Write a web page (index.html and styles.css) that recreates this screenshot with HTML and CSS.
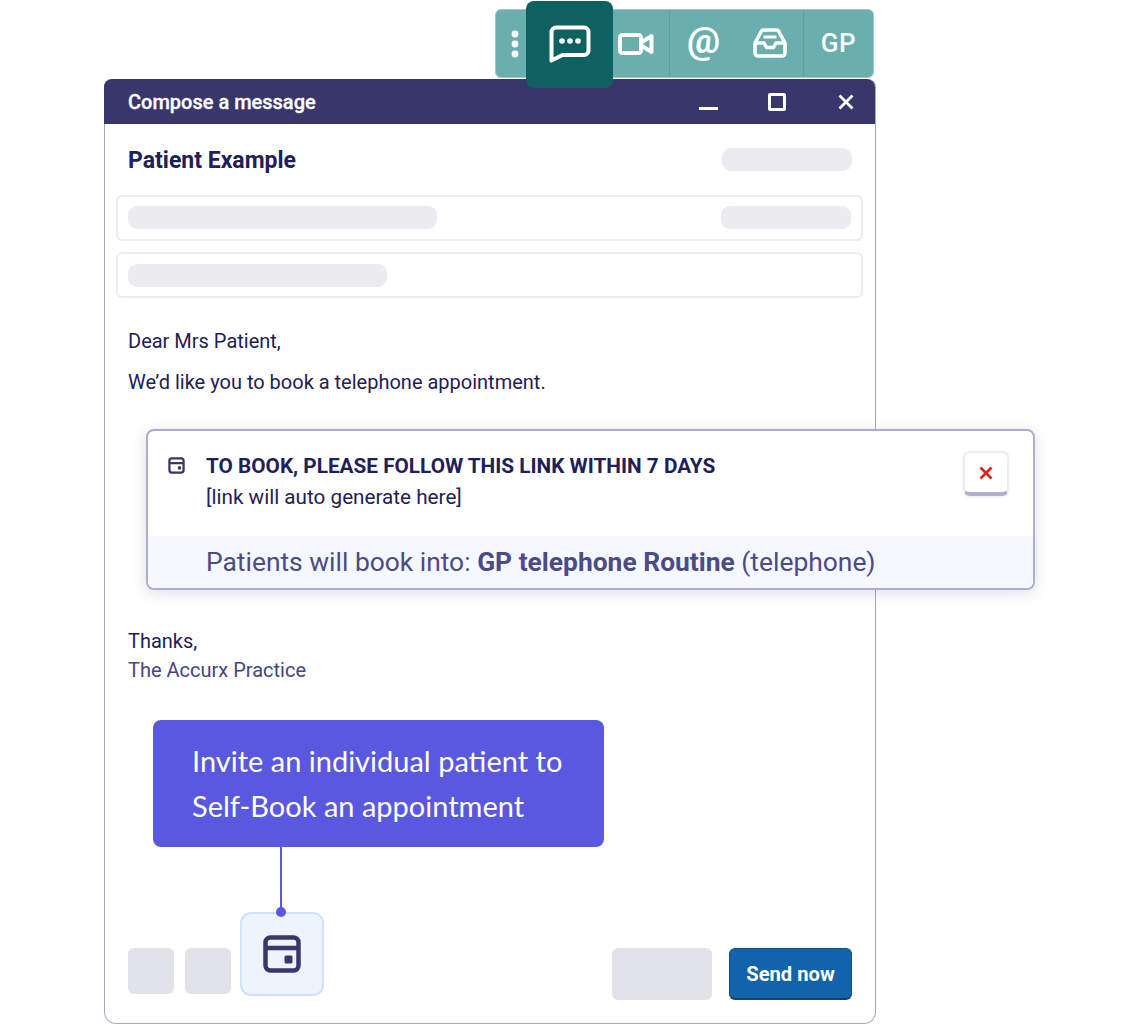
FILE: index.html
```html
<!DOCTYPE html>
<html lang="en">
<head>
<meta charset="utf-8">
<title>Compose a message</title>
<link rel="stylesheet" href="styles.css">
</head>
<body>
<div class="stage">
  <nav class="toolbar">
    <div class="tool tool-grip"><svg width="8" height="28" viewBox="0 0 8 28"><circle cx="4" cy="4" r="3.400" fill="#fff"/><circle cx="4" cy="14" r="3.400" fill="#fff"/><circle cx="4" cy="24" r="3.400" fill="#fff"/></svg></div>
    <div class="tool tool-active"><svg width="42" height="38" viewBox="0 0 42 38"><path d="M2.500 33V7a4.500 4.500 0 0 1 4.500-4.500h28a4.500 4.500 0 0 1 4.500 4.500v18.500a4.500 4.500 0 0 1-4.500 4.500H13.500L2.500 35.500Z" fill="none" stroke="#fff" stroke-width="4" stroke-linejoin="round"/><circle cx="13" cy="16" r="2.800" fill="#fff"/><circle cx="21" cy="16" r="2.800" fill="#fff"/><circle cx="29" cy="16" r="2.800" fill="#fff"/></svg></div>
    <div class="tool tool-video"><svg width="36" height="22" viewBox="0 0 36 22"><rect x="2" y="2" width="21" height="18" rx="2.500" fill="none" stroke="#fff" stroke-width="4"/><path d="M24 9 33.500 3V19L24 13" fill="none" stroke="#fff" stroke-width="4" stroke-linejoin="round"/></svg></div>
    <div class="tool tool-at">@</div>
    <div class="tool tool-inbox"><svg width="34" height="30" viewBox="0 0 34 30"><path d="M2 15 8.500 3a2 2 0 0 1 1.700-1h13.600a2 2 0 0 1 1.700 1L32 15v10a3 3 0 0 1-3 3H5a3 3 0 0 1-3-3Z" fill="none" stroke="#fff" stroke-width="3.600" stroke-linejoin="round"/><path d="M2 15h9l2.500 4.500h7L23 15h9" fill="none" stroke="#fff" stroke-width="3.600" stroke-linejoin="round"/><path d="M10.500 9h13" stroke="#fff" stroke-width="3"/></svg></div>
    <div class="tool tool-gp">GP</div>
  </nav>

  <main class="window">
    <header class="titlebar">
      <h1 class="title">Compose a message</h1>
      <div class="controls">
        <span class="ctl-min"></span>
        <span class="ctl-max"></span>
        <svg class="ctl-close" width="16" height="16" viewBox="0 0 16 16"><path d="M1.500 1.500l13 13M14.500 1.500l-13 13" stroke="#fff" stroke-width="2.800"/></svg>
      </div>
    </header>

    <section class="body">
      <div class="patient-row">
        <h2 class="patient">Patient Example</h2>
        <span class="bar bar-status"></span>
      </div>
      <div class="field field-one">
        <span class="bar bar-a"></span>
        <span class="bar bar-b"></span>
      </div>
      <div class="field field-two">
        <span class="bar bar-c"></span>
      </div>

      <p class="line greet">Dear Mrs Patient,</p>
      <p class="line ask">We’d like you to book a telephone appointment.</p>

      <div class="callout">
        <div class="callout-main">
          <svg class="cal-small" width="17" height="17" viewBox="0 0 24 24"><rect x="2" y="2" width="20" height="20" rx="3.500" fill="none" stroke="#38366a" stroke-width="3.200"/><path d="M3 8.500h18" stroke="#38366a" stroke-width="3.200"/><rect x="14" y="13" width="4.500" height="4.500" rx="1" fill="#38366a"/></svg>
          <div class="callout-text">
            <div class="callout-head">TO BOOK, PLEASE FOLLOW THIS LINK WITHIN 7 DAYS</div>
            <div class="callout-link">[link will auto generate here]</div>
          </div>
          <button class="remove" type="button" aria-label="Remove"><svg width="14" height="14" viewBox="0 0 14 14"><path d="M1.500 1.500l11 11M12.500 1.500l-11 11" stroke="#e2231a" stroke-width="2.600"/></svg></button>
        </div>
        <div class="callout-foot">Patients will book into: <b>GP telephone Routine</b> (telephone)</div>
      </div>

      <p class="line thanks">Thanks,</p>
      <p class="line sign">The Accurx Practice</p>

      <div class="tip">Invite an individual patient to<br>Self-Book an appointment</div>
      <div class="connector"></div>

      <div class="actions">
        <span class="square"></span>
        <span class="square"></span>
        <span class="self-book">
          <span class="dot"></span>
          <svg width="38" height="38" viewBox="0 0 38 38"><rect x="2.500" y="2.500" width="33" height="33" rx="5" fill="none" stroke="#38366a" stroke-width="4.500"/><path d="M3 13h32" stroke="#38366a" stroke-width="4.500"/><rect x="21.500" y="20.500" width="8" height="8" rx="1.500" fill="#38366a"/></svg>
        </span>
        <span class="secondary"></span>
        <button class="send" type="button">Send now</button>
      </div>
    </section>
  </main>
</div>
</body>
</html>
```

FILE: styles.css
```css
* { box-sizing: border-box; }
html, body { margin: 0; padding: 0; background: #fff; }
body { font-family: Roboto, "Liberation Sans", sans-serif; color: #1f2057; }
.stage { width: 1148px; height: 1024px; padding-top: 9px; overflow: hidden; }

.toolbar {
  display: flex;
  height: 69px;
  width: 379px;
  margin-left: 495px;
  background: #6aaeae;
  border: 1px solid #9fc9c9;
  border-radius: 6px;
  color: #fff;
}
.tool { display: flex; align-items: center; justify-content: center; height: 100%; }
.tool-grip { width: 30px; padding-left: 15px; justify-content: flex-start; }
.tool-active {
  width: 87px;
  height: 87px;
  margin-top: -9px;
  background: #0f6060;
  border-radius: 8px;
  position: relative;
  z-index: 2;
  padding-bottom: 2px;
}
.tool-video { width: 57px; border-right: 1px solid #5f9d9e; padding-right: 10px; }
.tool-at { width: 67px; font-size: 37px; font-weight: 700; padding-bottom: 7px; }
.tool-inbox { width: 67px; border-right: 1px solid #5f9d9e; padding-bottom: 1px; }
.tool-gp { flex: 1; font-size: 26px; font-weight: 500; letter-spacing: .5px; padding-bottom: 1px; }

.window {
  width: 772px;
  height: 945px;
  margin-left: 104px;
  margin-top: 1px;
  border: 1px solid #a9a7c9;
  border-top: 0;
  border-radius: 8px 8px 12px 12px;
  background: #fff;
}
.titlebar {
  display: flex;
  align-items: center;
  justify-content: space-between;
  height: 45px;
  margin: 0 0 0 -1px;
  padding: 0 21px 0 24px;
  background: #38366a;
  border-radius: 8px 8px 0 0;
  color: #fff;
}
.title { margin: 0; font-size: 20px; font-weight: 500; line-height: 1; -webkit-text-stroke: .3px #fff; }
.controls { display: flex; align-items: center; }
.ctl-min { width: 19px; height: 3px; background: #fff; margin: 0 50px 0 0; position: relative; top: 7px; }
.ctl-max { width: 18px; height: 18px; border: 3px solid #fff; border-radius: 2px; margin-right: 52px; }
.ctl-close { display: block; }

.body { padding: 0 23px 0 23px; }
.bar { display: block; height: 23px; background: #ebebf0; border-radius: 9px; }
.patient-row { display: flex; align-items: center; justify-content: space-between; height: 71px; }
.patient { margin: 0; padding-top: 1px; font-size: 23px; font-weight: 700; line-height: 1; }
.bar-status { width: 130px; }
.field {
  display: flex;
  align-items: center;
  justify-content: space-between;
  width: 747px;
  height: 46px;
  margin-left: -12px;
  padding: 0 10px 2px;
  border: 2px solid #ebebf3;
  border-radius: 6px;
  background: #fff;
}
.field-two { margin-top: 11px; padding-bottom: 0; }
.bar-a { width: 309px; }
.bar-b { width: 130px; }
.bar-c { width: 259px; }

.line { margin: 0; font-size: 20px; line-height: 24px; color: #1f2057; }
.greet { margin-top: 31px; }
.ask { margin-top: 17px; }

.callout {
  position: relative;
  width: 889px;
  height: 161px;
  margin: 35px 0 0 18px;
  background: #fff;
  border: 2px solid #aeacd0;
  border-radius: 8px;
  box-shadow: 0 3px 14px rgba(56, 54, 106, .16);
  overflow: hidden;
}
.callout-main { display: flex; height: 105px; padding: 20px 24px 0 20px; }
.cal-small { margin-top: 6px; flex: none; }
.callout-text { flex: 1; padding: 3px 0 0 21px; }
.callout-head { font-size: 20.750px; font-weight: 700; line-height: 24px; }
.callout-link { font-size: 20.700px; line-height: 24px; margin-top: 7px; }
.remove {
  display: flex;
  align-items: center;
  justify-content: center;
  width: 46px;
  height: 45px;
  padding: 0;
  background: #fff;
  border: 2px solid #ececf3;
  border-bottom: 4px solid #b1afd0;
  border-radius: 7px;
  box-shadow: 0 1px 3px rgba(56, 54, 106, .1);
}
.callout-foot {
  height: 52px;
  padding: 10px 0 0 58px;
  background: #f5f8fe;
  font-size: 26.400px;
  line-height: 32px;
  color: #4b4b85;
  white-space: nowrap;
}
.callout-foot b { font-weight: 700; }

.thanks { margin-top: 39px; }
.sign { margin-top: 5px; color: #46467f; }

.tip {
  width: 451px;
  height: 127px;
  margin: 38px 0 0 25px;
  padding: 18px 0 0 39px;
  background: #5a58de;
  border-radius: 8px;
  color: #fff;
  font-family: Lato, "Noto Sans", sans-serif;
  font-size: 29px;
  font-weight: 400;
  line-height: 45px;
  position: relative;
  z-index: 1;
}
.connector { width: 2px; height: 65px; margin-left: 152px; background: #5a58de; }

.actions { display: flex; align-items: flex-end; height: 88px; }
.square { width: 46px; height: 46px; margin-right: 11px; margin-bottom: 6px; background: #e2e2eb; border-radius: 6px; }
.self-book {
  position: relative;
  display: flex;
  align-items: center;
  justify-content: center;
  width: 84px;
  height: 84px;
  margin: 0 288px 4px -2px;
  background: #eef4fd;
  border: 2px solid #cfe2fa;
  border-radius: 11px;
}
.dot { position: absolute; top: -7px; left: 34px; width: 10px; height: 10px; border-radius: 50%; background: #5a58de; }
.secondary { width: 100px; height: 52px; background: #e2e2eb; border-radius: 6px; margin-right: 17px; }
.send {
  width: 123px;
  height: 52px;
  padding: 0;
  background: #1263aa;
  border: 1px solid #134f87;
  border-bottom: 2px solid #134173;
  border-radius: 6px;
  color: #fff;
  font-family: Roboto, "Liberation Sans", sans-serif;
  font-size: 20.200px;
  font-weight: 700;
}
```
